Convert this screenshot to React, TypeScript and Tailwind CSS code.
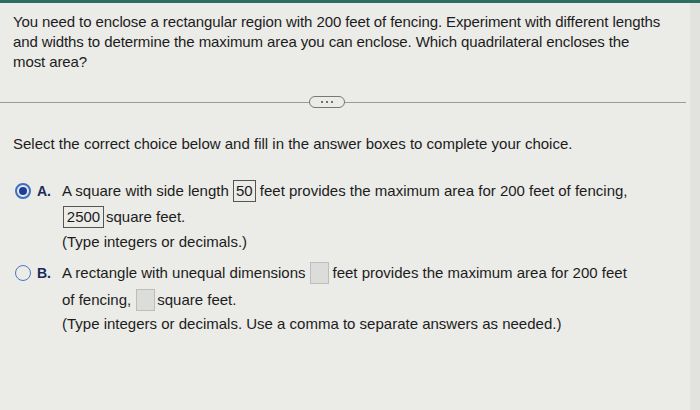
import React from "react";

function Box({ children, w, m }: { children?: React.ReactNode; w: string; m: string }) {
  return (
    <span
      className={`inline-flex items-center justify-center align-middle ${w} ${m} h-[22px] border ${
        children ? "border-[#555] bg-transparent" : "border-[#bdbdbd] bg-[#dcdcda]"
      }`}
    >
      {children}
    </span>
  );
}

export default function App() {
  return (
    <div
      className="relative w-[700px] h-[410px] overflow-hidden bg-[#ebebe8] text-[#1c1c1c]"
      style={{ fontFamily: '"Liberation Sans", Arial, sans-serif' }}
    >
      <div className="h-[3px] bg-[#2a6f62]" />
      <div className="absolute right-0 top-[3px] bottom-0 w-[10px] bg-[#e2e2df]" />
      <div className="pl-[13px] pt-[9px] text-[15px] leading-[20px] tracking-[-0.1px] whitespace-nowrap">
        You need to enclose a rectangular region with 200 feet of fencing. Experiment with different lengths
        <br />
        and widths to determine the maximum area you can enclose. Which quadrilateral encloses the
        <br />
        most area?
      </div>
      <div className="relative mt-[24px] mr-[14px] h-[12px] flex items-center">
        <div className="w-full h-[1px] bg-[#9a9a98]" />
        <div className="absolute left-[309px] top-0 w-[36px] h-[12px] rounded-full border border-[#777] bg-[#ebebe8] flex items-center justify-center gap-[3px]">
          <span className="w-[2px] h-[2px] bg-[#444] rounded-full" />
          <span className="w-[2px] h-[2px] bg-[#444] rounded-full" />
          <span className="w-[2px] h-[2px] bg-[#444] rounded-full" />
        </div>
      </div>
      <div className="pl-[13px] mt-[26px] text-[15px] leading-[20px]">
        Select the correct choice below and fill in the answer boxes to complete your choice.
      </div>
      <div className="mt-[26px] flex text-[15px] leading-[20px]">
        <div className="w-[62px] shrink-0 flex items-start pt-[3px]">
          <span className="ml-[15px] w-[16px] h-[16px] rounded-full border-2 border-[#3b6fc4] flex items-center justify-center">
            <span className="w-[8px] h-[8px] rounded-full bg-[#1d3f9a]" />
          </span>
          <span className="ml-[6px] font-bold text-[14px] leading-[16px] text-[#1a2a5a]">A.</span>
        </div>
        <div>
          <div className="h-[22px] flex items-center">
            A square with side length<Box w="w-[23px]" m="mx-[4px]">50</Box>feet provides the maximum area for 200 feet of fencing,
          </div>
          <div className="mt-[4px] h-[22px] flex items-center">
            <Box w="w-[41px]" m="ml-[1px] mr-[2px]">2500</Box>square feet.
          </div>
          <div className="mt-[4px]">(Type integers or decimals.)</div>
        </div>
      </div>
      <div className="mt-[10px] flex text-[15px] leading-[20px]">
        <div className="w-[62px] shrink-0 flex items-start pt-[3px]">
          <span className="ml-[15px] w-[16px] h-[16px] rounded-full border-[1.5px] border-[#4a78c0]" />
          <span className="ml-[6px] font-bold text-[14px] leading-[16px] text-[#1a2a5a]">B.</span>
        </div>
        <div>
          <div className="h-[22px] flex items-center">
            A rectangle with unequal dimensions<Box w="w-[19px]" m="mx-[4px]" />feet provides the maximum area for 200 feet
          </div>
          <div className="mt-[5px] h-[22px] flex items-center">
            of fencing,<Box w="w-[19px]" m="ml-[5px] mr-[2px]" />square feet.
          </div>
          <div className="mt-[3px]">(Type integers or decimals. Use a comma to separate answers as needed.)</div>
        </div>
      </div>
    </div>
  );
}
